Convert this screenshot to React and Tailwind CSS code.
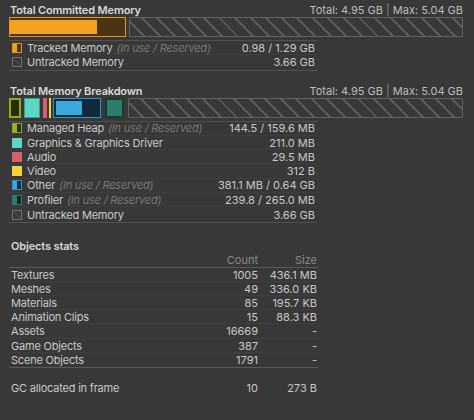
import React from "react";

const font = { fontFamily: "Inter, 'Noto Sans', sans-serif" };

const Hatch = ({ className = "" }) => (
  <div
    className={`flex-1 h-full border border-[#626262] rounded-[1px] bg-[repeating-linear-gradient(45deg,transparent_0_9px,#5a5a5a_9px_11px)] ${className}`}
  />
);

const Header = ({ title }) => (
  <div className="flex items-center justify-between h-[14px]">
    <span className="font-semibold tracking-[-0.15px] text-[#d8d8d8] pl-[1px]">{title}</span>
    <span className="text-[#bdbdbd]">
      Total: 4.95 GB <span className="text-[#8a8a8a]">|</span> Max: 5.04 GB
    </span>
  </div>
);

// legend swatches
const Split = ({ light, dark, border }) => (
  <div className={`w-[10px] h-[10px] flex border ${border}`}>
    <div className={`w-[4px] h-full ${light}`} />
    <div className={`flex-1 h-full ${dark}`} />
  </div>
);
const Solid = ({ color }) => <div className={`w-[10px] h-[10px] ${color}`} />;
const Untracked = () => (
  <svg width="10" height="10" viewBox="0 0 10 10">
    <rect x="0.5" y="0.5" width="9" height="9" fill="none" stroke="#707070" />
    <path d="M2 2 L8 8" stroke="#555" />
  </svg>
);

const LegendRow = ({ icon, label, note, value, last }) => (
  <div
    className={`flex items-center h-[14.3px] ${last ? "" : "border-b border-[#3d3d3d]"}`}
  >
    <div className="w-[10px] ml-[3px] mr-[5px] flex items-center">{icon}</div>
    <span className="text-[#cacaca] tracking-[-0.2px]">{label}</span>
    {note && <span className="italic text-[#777777] ml-[4px] tracking-[-0.2px]">{note}</span>}
    <span className="ml-auto pr-[2px] text-[#c8c8c8]">{value}</span>
  </div>
);

const objects = [
  ["Textures", "1005", "436.1 MB"],
  ["Meshes", "49", "336.0 KB"],
  ["Materials", "85", "195.7 KB"],
  ["Animation Clips", "15", "88.3 KB"],
  ["Assets", "16669", "-"],
  ["Game Objects", "387", "-"],
  ["Scene Objects", "1791", "-"],
];

export default function App() {
  return (
    <div
      className="w-[474px] h-[420px] bg-[#383838] text-[11px] leading-[14px] pl-[9px] pr-[11px] pt-[3px] overflow-hidden"
      style={font}
    >
      {/* Total Committed Memory */}
      <Header title="Total Committed Memory" />
      <div className="flex h-[20px]">
        <div className="w-[117px] h-full border border-[#e3951c] bg-[#4a3412] py-[2px] pr-[2px]">
          <div className="w-[87px] h-full bg-[#f4a31f]" />
        </div>
        <Hatch className="ml-[3px]" />
      </div>
      <div className="w-[308px] mt-[3px] border-t border-b border-[#505050]">
        <LegendRow
          icon={<Split light="bg-[#f4a31f]" dark="bg-[#4a3412]" border="border-[#e3951c]" />}
          label="Tracked Memory"
          note="(In use / Reserved)"
          value="0.98 / 1.29 GB"
        />
        <LegendRow icon={<Untracked />} label="Untracked Memory" value="3.66 GB" last />
      </div>

      {/* Total Memory Breakdown */}
      <div className="mt-[13px]">
        <Header title="Total Memory Breakdown" />
      </div>
      <div className="flex h-[20px]">
        <div className="w-[12px] h-full border-2 border-[#93a91a] bg-[#262c09]" />
        <div className="w-[16px] h-full ml-[3px] bg-[#5dd6c6] border border-[#3b9d91]" />
        <div className="w-[4px] h-full ml-[3px] bg-[#d6616a]" />
        <div className="w-[2px] h-full ml-[2px] bg-[#efd23c]" />
        <div className="w-[48px] h-full ml-[2px] border border-[#2f95c6] bg-[#10293b] p-[2px]">
          <div className="w-[26px] h-full bg-[#3aa9dc]" />
        </div>
        <div className="w-[19px] h-full ml-[4px] border-2 border-[#173a32] bg-[#2e7d6a]" />
        <Hatch className="ml-[4px]" />
      </div>
      <div className="w-[308px] mt-[3px] border-t border-b border-[#505050]">
        <LegendRow
          icon={<Split light="bg-[#9cb31a]" dark="bg-[#262c09]" border="border-[#93a91a]" />}
          label="Managed Heap"
          note="(In use / Reserved)"
          value="144.5 / 159.6 MB"
        />
        <LegendRow icon={<Solid color="bg-[#5dd6c6]" />} label="Graphics & Graphics Driver" value="211.0 MB" />
        <LegendRow icon={<Solid color="bg-[#d6616a]" />} label="Audio" value="29.5 MB" />
        <LegendRow icon={<Solid color="bg-[#efd23c]" />} label="Video" value="312 B" />
        <LegendRow
          icon={<Split light="bg-[#3aa9dc]" dark="bg-[#10293b]" border="border-[#2f95c6]" />}
          label="Other"
          note="(In use / Reserved)"
          value="381.1 MB / 0.64 GB"
        />
        <LegendRow
          icon={<Split light="bg-[#2e7d6a]" dark="bg-[#10241f]" border="border-[#2e7d6a]" />}
          label="Profiler"
          note="(In use / Reserved)"
          value="239.8 / 265.0 MB"
        />
        <LegendRow icon={<Untracked />} label="Untracked Memory" value="3.66 GB" last />
      </div>

      {/* Objects stats */}
      <div className="w-[309px] mt-[16px]">
        <div className="h-[14px] pl-[2px] font-semibold tracking-[-0.15px] text-[#d8d8d8]">Objects stats</div>
        <div className="grid grid-cols-[1fr_60px_60px] h-[15px] items-center border-b border-[#5a5a5a] text-[#8a8a8a]">
          <span />
          <span className="text-right">Count</span>
          <span className="text-right pr-[1px]">Size</span>
        </div>
        <div className="border-b border-[#5a5a5a]">
          {objects.map(([name, count, size], i) => (
            <div
              key={name}
              className={`grid grid-cols-[1fr_60px_60px] h-[14.2px] items-center text-[#c8c8c8] ${
                i < objects.length - 1 ? "border-b border-[#3e3e3e]" : ""
              }`}
            >
              <span className="pl-[2px] tracking-[-0.2px]">{name}</span>
              <span className="text-right">{count}</span>
              <span className="text-right pr-[1px]">{size}</span>
            </div>
          ))}
        </div>
        <div className="grid grid-cols-[1fr_60px_60px] h-[14px] items-center mt-[13px] text-[#c8c8c8]">
          <span className="pl-[2px] tracking-[-0.2px]">GC allocated in frame</span>
          <span className="text-right">10</span>
          <span className="text-right pr-[1px]">273 B</span>
        </div>
      </div>
    </div>
  );
}
